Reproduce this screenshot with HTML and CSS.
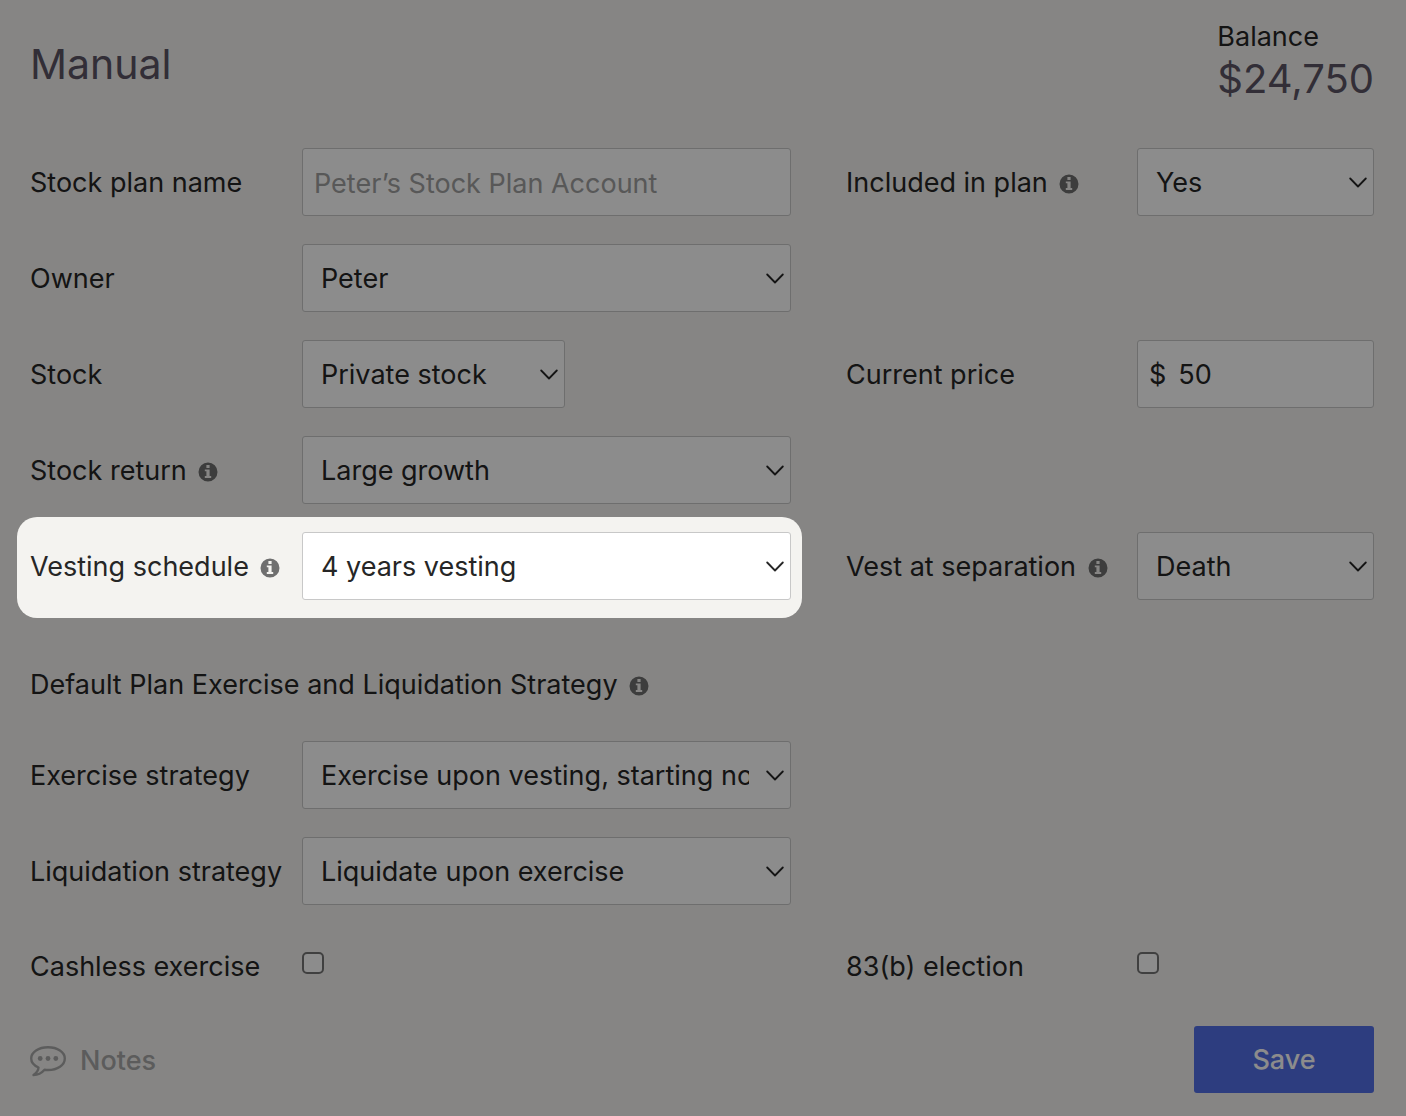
FILE: index.html
```html
<!DOCTYPE html>
<html lang="en">

<head>
    <meta charset="UTF-8">
    <meta name="viewport" content="width=device-width, initial-scale=1.0">
    <title>Stock plan</title>
    <link rel="stylesheet" href="styles.css">
</head>

<body>
<!-- shared icons -->
<svg class="sprite" aria-hidden="true">
    <symbol id="chevron" viewBox="0 0 18 12">
        <path d="M1.2 1.5 L9 9.5 L16.8 1.5" fill="none" stroke="currentColor" stroke-width="1.8" stroke-linecap="round" stroke-linejoin="round"/>
    </symbol>
    <symbol id="info" viewBox="0 0 20 20">
        <path fill="currentColor" fill-rule="evenodd" d="M10 .5a9.5 9.5 0 1 1 0 19a9.5 9.5 0 0 1 0-19ZM8.400 3v3h3.200V3ZM6.800 7.400v1.900h1.600v4.800H6.800V16h6.400v-1.900h-1.600V7.400Z"/>
    </symbol>
</svg>

<form class="account">
    <header class="account-header">
        <h1 class="account-title">Manual</h1>
        <div class="balance">
            <div class="balance-label">Balance</div>
            <div class="balance-value">$24,750</div>
        </div>
    </header>

    <!-- Account details -->
    <div class="rows">
        <div class="row">
            <div class="field">
                <label for="plan-name">Stock plan name</label>
                <input class="control" id="plan-name" type="text" placeholder="Peter’s Stock Plan Account">
            </div>
            <div class="field field-side">
                <label for="included">Included in plan <svg class="info"><use href="#info"/></svg></label>
                <div class="select">
                    <select class="control" id="included"><option>Yes</option><option>No</option></select>
                    <svg class="chevron"><use href="#chevron"/></svg>
                </div>
            </div>
        </div>
        <div class="row">
            <div class="field">
                <label for="owner">Owner</label>
                <div class="select">
                    <select class="control" id="owner"><option>Peter</option></select>
                    <svg class="chevron"><use href="#chevron"/></svg>
                </div>
            </div>
        </div>
        <div class="row">
            <div class="field">
                <label for="stock">Stock</label>
                <div class="select select-short">
                    <select class="control" id="stock"><option>Private stock</option></select>
                    <svg class="chevron"><use href="#chevron"/></svg>
                </div>
            </div>
            <div class="field field-side">
                <label for="price">Current price</label>
                <div class="control money">
                    <span>$</span>
                    <input id="price" type="text" value="50">
                </div>
            </div>
        </div>
        <div class="row">
            <div class="field">
                <label for="stock-return">Stock return <svg class="info"><use href="#info"/></svg></label>
                <div class="select">
                    <select class="control" id="stock-return"><option>Large growth</option></select>
                    <svg class="chevron"><use href="#chevron"/></svg>
                </div>
            </div>
        </div>
        <div class="row">
            <div class="field spotlight">
                <label for="vesting">Vesting schedule <svg class="info"><use href="#info"/></svg></label>
                <div class="select">
                    <select class="control" id="vesting"><option>4 years vesting</option></select>
                    <svg class="chevron"><use href="#chevron"/></svg>
                </div>
            </div>
            <div class="field field-side">
                <label for="separation">Vest at separation <svg class="info"><use href="#info"/></svg></label>
                <div class="select">
                    <select class="control" id="separation"><option>Death</option></select>
                    <svg class="chevron"><use href="#chevron"/></svg>
                </div>
            </div>
        </div>
    </div>

    <!-- Strategy -->
    <h2 class="section-title">Default Plan Exercise and Liquidation Strategy <svg class="info"><use href="#info"/></svg></h2>
    <div class="rows">
        <div class="row">
            <div class="field">
                <label for="exercise">Exercise strategy</label>
                <div class="select">
                    <select class="control" id="exercise"><option>Exercise upon vesting, starting now</option></select>
                    <svg class="chevron"><use href="#chevron"/></svg>
                </div>
            </div>
        </div>
        <div class="row">
            <div class="field">
                <label for="liquidation">Liquidation strategy</label>
                <div class="select">
                    <select class="control" id="liquidation"><option>Liquidate upon exercise</option></select>
                    <svg class="chevron"><use href="#chevron"/></svg>
                </div>
            </div>
        </div>
    </div>

    <div class="row checks">
        <div class="field">
            <label for="cashless">Cashless exercise</label>
            <input class="checkbox" id="cashless" type="checkbox">
        </div>
        <div class="field field-side">
            <label for="election">83(b) election</label>
            <input class="checkbox" id="election" type="checkbox">
        </div>
    </div>

    <footer class="account-footer">
        <button class="notes" type="button">
            <svg class="notes-icon" viewBox="0 0 36 32">
                <path d="M18 2.200C8.500 2.200 1.200 7.200 1.200 13.500C1.200 17.300 4 20.500 8.500 22.500C8.300 25.500 6.500 28 3.500 30C8.500 30 11.700 28 14.500 24.700C15.600 24.900 16.800 25 18 25C27.500 25 34.800 20 34.800 13.500C34.800 7.200 27.500 2.200 18 2.200Z" fill="none" stroke="currentColor" stroke-width="2.400" stroke-linejoin="round"/>
                <g fill="currentColor">
                    <circle cx="10.200" cy="13.500" r="2.400"/>
                    <circle cx="18" cy="13.500" r="2.400"/>
                    <circle cx="25.800" cy="13.500" r="2.400"/>
                </g>
            </svg>
            Notes
        </button>
        <button class="save" type="submit">Save</button>
    </footer>
</form>
</body>

</html>
```

FILE: styles.css
```css
* {
    box-sizing: border-box;
}

body {
    margin: 0;
    min-height: 100vh;
    background-color: #f4f3f0;
    color: #262626;
    font-family: Inter, "Liberation Sans", sans-serif;
    font-size: 27px;
    line-height: 34px;
    overflow-x: hidden;
}

input,
select,
button {
    font: inherit;
    color: inherit;
}

.sprite {
    display: none;
}

.account {
    padding: 20px 32px 22px 30px;
}

.account-header {
    display: flex;
    justify-content: space-between;
    margin-bottom: 44px;
    color: #5b5464;
}

.account-title {
    margin: 18px 0 0;
    font-size: 41px;
    font-weight: 400;
    line-height: 52px;
}

.balance-label {
    color: #262626;
}

.balance-value {
    font-size: 40px;
    line-height: 50px;
}

.rows {
    display: grid;
    gap: 28px;
}

.row {
    display: grid;
    grid-template-columns: 1fr 528px;
    column-gap: 55px;
}

.field {
    display: grid;
    grid-template-columns: 272px minmax(0, 1fr);
    align-items: center;
}

.field-side {
    grid-template-columns: 291px minmax(0, 1fr);
}

.field label {
    padding-top: 2px;
    white-space: nowrap;
}

/* everything outside the highlighted field is dimmed */
.spotlight {
    position: relative;
    z-index: 1;
    margin: -15px -11px -18px -13px;
    padding: 15px 11px 18px 13px;
    border-radius: 20px;
    background-color: #f4f3f0;
    box-shadow: 0 0 0 200vmax rgba(0, 0, 0, 0.45);
}

.control {
    width: 100%;
    height: 68px;
    padding: 2px 11px 0;
    border: 1px solid #c8c8c8;
    border-radius: 3px;
    background-color: #fff;
}

.control::placeholder {
    color: #a0a0a0;
}

.select {
    position: relative;
}

.select-short {
    width: 263px;
}

.select .control {
    display: block;
    appearance: none;
    padding: 2px 41px 0 18px;
}

.chevron {
    position: absolute;
    top: 29px;
    right: 7px;
    width: 18px;
    height: 12px;
    pointer-events: none;
}

.money {
    display: flex;
    align-items: center;
    gap: 12px;
}

.money input {
    flex: 1;
    min-width: 0;
    padding: 0;
    border: 0;
    background: none;
}

.info {
    width: 20px;
    height: 20px;
    margin-left: 4px;
    vertical-align: -2px;
    color: #6f6f6f;
}

.section-title {
    margin: 68px 0 39px;
    font-size: 27px;
    font-weight: 400;
}

.checks {
    margin-top: 43px;
}

.checkbox {
    appearance: none;
    width: 22px;
    height: 22px;
    margin: 0 0 6px;
    border: 2px solid #767676;
    border-radius: 5px;
    background-color: #fff;
}

.account-footer {
    display: flex;
    justify-content: space-between;
    align-items: center;
    margin-top: 42px;
}

.notes {
    display: flex;
    align-items: center;
    gap: 14px;
    padding: 2px 0 0;
    border: 0;
    background: none;
    color: #a8a8a8;
    font-weight: 500;
}

.notes-icon {
    width: 36px;
    height: 32px;
}

.save {
    width: 180px;
    height: 67px;
    border: 0;
    border-radius: 3px;
    background-color: #526fe7;
    color: #fff;
    font-weight: 500;
}
```
